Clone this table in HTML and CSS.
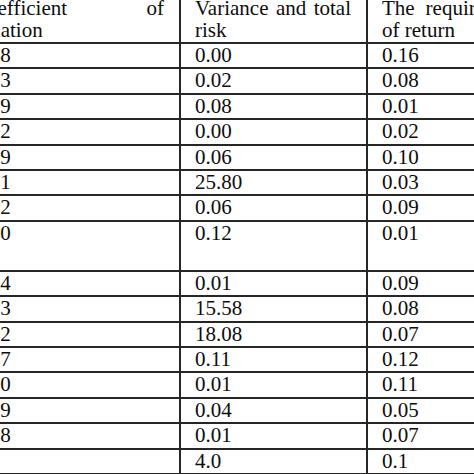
FILE: index.html
```html
<!DOCTYPE html>
<html lang="en">
<head>
<meta charset="utf-8">
<title>Table</title>
<link rel="stylesheet" href="styles.css">
</head>
<body>
<table class="data">
  <colgroup>
    <col class="c1">
    <col class="c2">
    <col class="c3">
  </colgroup>
  <thead>
    <tr>
      <th class="first">Coefficient of<br>variation</th>
      <th>Variance and total risk</th>
      <th>The required rate of return</th>
    </tr>
  </thead>
  <tbody>
    <tr><td>0.48</td><td>0.00</td><td>0.16</td></tr>
    <tr><td>0.53</td><td>0.02</td><td>0.08</td></tr>
    <tr><td>0.29</td><td>0.08</td><td>0.01</td></tr>
    <tr><td>0.12</td><td>0.00</td><td>0.02</td></tr>
    <tr><td>0.39</td><td>0.06</td><td>0.10</td></tr>
    <tr><td>0.51</td><td>25.80</td><td>0.03</td></tr>
    <tr><td>0.22</td><td>0.06</td><td>0.09</td></tr>
    <tr class="tall"><td>0.40</td><td>0.12</td><td>0.01</td></tr>
    <tr><td>0.14</td><td>0.01</td><td>0.09</td></tr>
    <tr><td>0.33</td><td>15.58</td><td>0.08</td></tr>
    <tr><td>0.42</td><td>18.08</td><td>0.07</td></tr>
    <tr><td>0.17</td><td>0.11</td><td>0.12</td></tr>
    <tr><td>0.20</td><td>0.01</td><td>0.11</td></tr>
    <tr><td>0.19</td><td>0.04</td><td>0.05</td></tr>
    <tr><td>0.28</td><td>0.01</td><td>0.07</td></tr>
    <tr><td></td><td>4.0</td><td>0.1</td></tr>
  </tbody>
</table>
</body>
</html>
```
FILE: styles.css
```css
html, body {
  margin: 0;
  padding: 0;
  overflow: hidden;
  background: #fff;
}

.data {
  border-collapse: collapse;
  table-layout: fixed;
  width: 595px;
  margin: -5px 0 0 -42px;
  font-family: "Liberation Serif", "Times New Roman", serif;
  font-size: 21px;
  line-height: 23.4px;
  color: #0d0d0d;
}

.c1 { width: 221px; }
.c2 { width: 187px; }
.c3 { width: 187px; }

.data th,
.data td {
  border: 2px solid #262626;
  padding: 0 15px 0 14px;
  vertical-align: top;
  text-align: left;
  font-weight: normal;
}

.data th {
  line-height: 22px;
  padding-bottom: 1px;
  text-align: justify;
}

.data th.first {
  padding-left: 8px;
  text-indent: 5px;
  text-align-last: justify;
}

.data .tall td {
  padding-bottom: 24.6px;
}
```
